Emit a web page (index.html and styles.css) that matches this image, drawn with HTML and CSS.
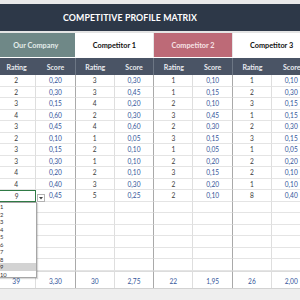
FILE: index.html
```html
<!DOCTYPE html>
<html>
<head>
<meta charset="utf-8">
<link rel="stylesheet" href="styles.css">
</head>
<body>
<div class="page">
  <div class="top-strip"></div>
  <div class="title">COMPETITIVE PROFILE MATRIX</div>
  <div class="sheet">
    <div class="groups">
      <div class="grp grp-our">Our Company</div>
      <div class="grp grp-white">Competitor 1</div>
      <div class="grp grp-pink">Competitor 2</div>
      <div class="grp grp-white">Competitor 3</div>
    </div>
    <div class="subhead">
      <div class="sh">Rating</div><div class="sh sh-end">Score</div>
      <div class="sh">Rating</div><div class="sh sh-end">Score</div>
      <div class="sh">Rating</div><div class="sh sh-end">Score</div>
      <div class="sh">Rating</div><div class="sh">Score</div>
    </div>
    <div class="row"><div class="c r">2</div><div class="c s e">0,20</div><div class="c r">3</div><div class="c s e">0,30</div><div class="c r">1</div><div class="c s e">0,10</div><div class="c r">1</div><div class="c s">0,10</div></div>
    <div class="row"><div class="c r">2</div><div class="c s e">0,30</div><div class="c r">3</div><div class="c s e">0,45</div><div class="c r">1</div><div class="c s e">0,15</div><div class="c r">2</div><div class="c s">0,30</div></div>
    <div class="row"><div class="c r">3</div><div class="c s e">0,15</div><div class="c r">4</div><div class="c s e">0,20</div><div class="c r">2</div><div class="c s e">0,10</div><div class="c r">3</div><div class="c s">0,15</div></div>
    <div class="row"><div class="c r">4</div><div class="c s e">0,60</div><div class="c r">2</div><div class="c s e">0,30</div><div class="c r">3</div><div class="c s e">0,45</div><div class="c r">1</div><div class="c s">0,15</div></div>
    <div class="row"><div class="c r">3</div><div class="c s e">0,45</div><div class="c r">4</div><div class="c s e">0,60</div><div class="c r">2</div><div class="c s e">0,30</div><div class="c r">2</div><div class="c s">0,30</div></div>
    <div class="row"><div class="c r">2</div><div class="c s e">0,10</div><div class="c r">1</div><div class="c s e">0,05</div><div class="c r">3</div><div class="c s e">0,15</div><div class="c r">3</div><div class="c s">0,15</div></div>
    <div class="row"><div class="c r">3</div><div class="c s e">0,15</div><div class="c r">2</div><div class="c s e">0,10</div><div class="c r">1</div><div class="c s e">0,05</div><div class="c r">1</div><div class="c s">0,05</div></div>
    <div class="row"><div class="c r">3</div><div class="c s e">0,30</div><div class="c r">1</div><div class="c s e">0,10</div><div class="c r">2</div><div class="c s e">0,20</div><div class="c r">2</div><div class="c s">0,20</div></div>
    <div class="row"><div class="c r">4</div><div class="c s e">0,20</div><div class="c r">2</div><div class="c s e">0,10</div><div class="c r">3</div><div class="c s e">0,15</div><div class="c r">2</div><div class="c s">0,10</div></div>
    <div class="row"><div class="c r">4</div><div class="c s e">0,40</div><div class="c r">3</div><div class="c s e">0,30</div><div class="c r">2</div><div class="c s e">0,20</div><div class="c r">1</div><div class="c s">0,10</div></div>
    <div class="row"><div class="c r sel">9<span class="dd-btn"><svg width="4" height="3" viewBox="0 0 4 3"><path d="M0 0h4L2 2.5z" fill="#444"/></svg></span>
        <div class="dd-list">
          <div class="dd-item">1</div><div class="dd-item">2</div><div class="dd-item">3</div><div class="dd-item">4</div><div class="dd-item">5</div>
          <div class="dd-item">6</div><div class="dd-item">7</div><div class="dd-item">8</div><div class="dd-item dd-hi">9</div><div class="dd-item">10</div>
        </div>
      </div><div class="c s e">0,45</div><div class="c r">5</div><div class="c s e">0,25</div><div class="c r">2</div><div class="c s e">0,10</div><div class="c r">8</div><div class="c s">0,40</div></div>
    <div class="row"><div class="c"></div><div class="c e"></div><div class="c"></div><div class="c e"></div><div class="c"></div><div class="c e"></div><div class="c"></div><div class="c"></div></div>
    <div class="row"><div class="c"></div><div class="c e"></div><div class="c"></div><div class="c e"></div><div class="c"></div><div class="c e"></div><div class="c"></div><div class="c"></div></div>
    <div class="row"><div class="c"></div><div class="c e"></div><div class="c"></div><div class="c e"></div><div class="c"></div><div class="c e"></div><div class="c"></div><div class="c"></div></div>
    <div class="row"><div class="c"></div><div class="c e"></div><div class="c"></div><div class="c e"></div><div class="c"></div><div class="c e"></div><div class="c"></div><div class="c"></div></div>
    <div class="row"><div class="c"></div><div class="c e"></div><div class="c"></div><div class="c e"></div><div class="c"></div><div class="c e"></div><div class="c"></div><div class="c"></div></div>
    <div class="row"><div class="c"></div><div class="c e"></div><div class="c"></div><div class="c e"></div><div class="c"></div><div class="c e"></div><div class="c"></div><div class="c"></div></div>
    <div class="row totals"><div class="c s">39</div><div class="c s e">3,30</div><div class="c s">30</div><div class="c s e">2,75</div><div class="c s">22</div><div class="c s e">1,95</div><div class="c s">26</div><div class="c s">2,00</div></div>
  </div>
  <div class="bottom-strip"></div>
</div>
</body>
</html>
```

FILE: styles.css
```css
* { box-sizing: border-box; }
html, body {
  margin: 0;
  padding: 0;
  background: #ffffff;
  overflow: hidden;
  width: 300px;
  height: 300px;
}
.page {
  width: 300px;
  height: 300px;
  overflow: hidden;
  font-family: Lato, "Liberation Sans", sans-serif;
}
.top-strip {
  height: 4px;
  background: #e9e9ea;
}
.title {
  height: 27px;
  background: #2d3848;
  color: #ffffff;
  font-weight: bold;
  font-size: 8.8px;
  letter-spacing: 0.1px;
  display: flex;
  align-items: center;
  padding-left: 63px;
}
.sheet {
  width: 315px;
  margin-left: -3px;
  border-top: 2px solid #e4e4e4;
}
.groups {
  display: grid;
  grid-template-columns: repeat(4, 78.6px);
  height: 25px;
  border-bottom: 1px solid #ffffff;
}
.grp {
  display: flex;
  align-items: center;
  justify-content: center;
  font-size: 7.3px;
  font-weight: bold;
  border-right: 1px solid #e6e6e6;
}
.grp-our { background: #6f8887; color: #e4eceb; border-right-color: #ffffff; }
.grp-white { background: #ffffff; color: #111111; }
.grp-pink { background: #bd6a77; color: #f7e3e6; }
.subhead {
  display: grid;
  grid-template-columns: repeat(8, 39.3px);
  height: 17px;
  background: #4a5465;
}
.sh {
  display: flex;
  align-items: center;
  justify-content: center;
  color: #e8ebef;
  font-size: 7px;
  font-weight: bold;
}
.sh-end { border-right: 1px solid #6c7684; }
.row {
  display: grid;
  grid-template-columns: repeat(8, 39.3px);
  height: 11.5px;
}
.c {
  display: flex;
  align-items: center;
  justify-content: center;
  font-size: 6.6px;
  border-right: 1px solid #dedede;
  border-bottom: 1px solid #e4e4e4;
  color: #3a3a3a;
}
.c.e { border-right-color: #a9a9a9; }
.c.s { color: #34569a; }
.totals {
  height: 17.5px;
}
.totals .c { border-bottom: none; border-top: 1px solid #dcdcdc; padding-top: 2px; }
.sel {
  position: relative;
  border: 1.5px solid #2f7a45;
}
.dd-btn {
  position: absolute;
  left: 39px;
  top: 3px;
  width: 8px;
  height: 8px;
  background: #ffffff;
  border: 1px solid #b3b3b3;
  display: flex;
  align-items: center;
  justify-content: center;
}
.dd-list {
  position: absolute;
  left: 0;
  top: 11px;
  width: 39px;
  height: 75.5px;
  background: #ffffff;
  border: 1px solid #a6a6a6;
  box-shadow: 1px 1px 1px rgba(0,0,0,0.15);
  z-index: 2;
}
.dd-item {
  height: 7.5px;
  font-size: 5.8px;
  line-height: 7.5px;
  padding-left: 1px;
  color: #333333;
}
.dd-hi { background: #d3d3d3; }
.bottom-strip {
  height: 12px;
  background: #eeeeee;
  border-top: 1px solid #d2d2d2;
}
```
